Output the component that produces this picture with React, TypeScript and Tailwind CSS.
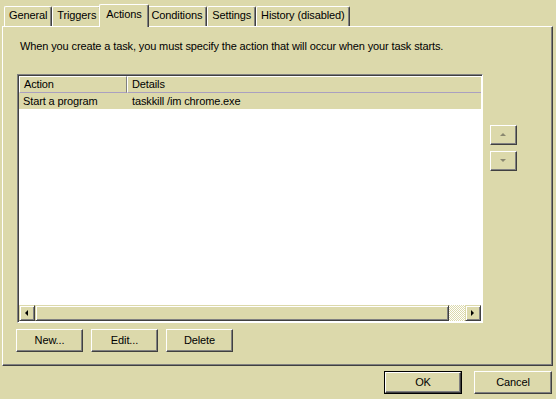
import React from 'react';

const face = 'bg-[#dcd9ab]';

function Tab({ label, active }: { label: string; active?: boolean }) {
  if (active) {
    return (
      <div className="relative z-10 -mb-px -mx-[2px] h-[23px] px-[6px] pt-[3px] bg-[#dcd9ab] border-t border-l border-white border-r border-r-[#404040] shadow-[inset_-1px_0_0_#808080] rounded-t-[2px]">
        {label}
      </div>
    );
  }
  return (
    <div className="h-[20px] px-[4px] pt-[2px] border-t border-l border-white border-r border-r-[#404040] shadow-[inset_-1px_0_0_#808080] rounded-t-[2px]">
      {label}
    </div>
  );
}

function Button({ label, w, h = 'h-[23px]', def }: { label?: string; w: string; h?: string; def?: boolean }) {
  return (
    <div className={`${w} ${h} ${def ? 'border border-black' : ''} ${face}`}>
      <div className="w-full h-full flex items-center justify-center border-t border-l border-white border-r border-b border-r-[#404040] border-b-[#404040] shadow-[inset_-1px_-1px_0_#808080]">
        {label}
      </div>
    </div>
  );
}

function Arrow({ dir }: { dir: 'up' | 'down' | 'left' | 'right' }) {
  const pts = {
    up: '0,3 3,0 6,3',
    down: '0,0 6,0 3,3',
    left: '3,0 3,6 0,3',
    right: '0,0 3,3 0,6',
  }[dir];
  const size = dir === 'up' || dir === 'down' ? { w: 7, h: 4 } : { w: 4, h: 7 };
  return (
    <svg width={size.w} height={size.h} viewBox={`0 0 ${size.w} ${size.h}`}>
      <polygon points={pts} fill={dir === 'up' || dir === 'down' ? '#8a8870' : '#000'} />
    </svg>
  );
}

function ScrollBtn({ dir }: { dir: 'left' | 'right' }) {
  return (
    <div className={`w-[16px] h-[16px] ${face} flex items-center justify-center border-t border-l border-[#dcd9ab] border-r border-b border-r-[#404040] border-b-[#404040] shadow-[inset_1px_1px_0_#fff,inset_-1px_-1px_0_#808080]`}>
      <Arrow dir={dir} />
    </div>
  );
}

export default function App() {
  return (
    <div
      className={`w-[556px] h-[399px] ${face} text-[11px] leading-[13px] tracking-[-0.12px] text-black overflow-hidden flex flex-col`}
      style={{ fontFamily: '"Liberation Sans", Arial, sans-serif' }}
    >
      <div className="flex items-end h-[26px] pl-[4px]">
        <Tab label="General" />
        <Tab label="Triggers" />
        <Tab label="Actions" active />
        <Tab label="Conditions" />
        <Tab label="Settings" />
        <Tab label="History (disabled)" />
      </div>

      <div className="ml-[2px] w-[551px] h-[340px] border-t border-l border-white border-r border-b border-r-[#404040] border-b-[#404040] shadow-[inset_-1px_-1px_0_#808080] pl-[14px] pt-[13px]">
        <div className="pl-[3px]">When you create a task, you must specify the action that will occur when your task starts.</div>

        <div className="flex mt-[21px]">
          <div className="w-[466px] h-[249px] border-t border-l border-[#808080] border-r border-b border-r-white border-b-white shadow-[inset_1px_1px_0_#404040] bg-white flex flex-col p-[1px]">
            <div className={`flex h-[17px] ${face}`}>
              <div className="w-[108px] flex items-center pl-[4px] border-t border-l border-white border-r border-b border-r-[#808080] border-b-[#aaa0c0]">Action</div>
              <div className="flex-1 flex items-center pl-[4px] border-t border-l border-white border-b border-b-[#aaa0c0]">Details</div>
            </div>
            <div className={`flex h-[16px] items-center ${face}`}>
              <div className="w-[108px] pl-[4px]">Start a program</div>
              <div className="pl-[5px]">taskkill /im chrome.exe</div>
            </div>
            <div className="flex-1" />
            <div className="flex h-[16px]">
              <ScrollBtn dir="left" />
              <div className={`flex-1 ${face} border-t border-l border-[#dcd9ab] border-r border-b border-r-[#404040] border-b-[#404040] shadow-[inset_1px_1px_0_#fff,inset_-1px_-1px_0_#808080]`} />
              <div className="w-[16px] bg-[repeating-conic-gradient(#ffffff_0_25%,#dcd9ab_0_50%)] bg-[length:2px_2px]" />
              <ScrollBtn dir="right" />
            </div>
          </div>

          <div className="ml-[7px] pt-[51px] flex flex-col gap-[6px]">
            <div className="w-[27px] h-[20px]">
              <div className={`w-full h-full ${face} flex items-center justify-center border-t border-l border-white border-r border-b border-r-[#404040] border-b-[#404040] shadow-[inset_-1px_-1px_0_#808080]`}>
                <Arrow dir="up" />
              </div>
            </div>
            <div className="w-[27px] h-[20px]">
              <div className={`w-full h-full ${face} flex items-center justify-center border-t border-l border-white border-r border-b border-r-[#404040] border-b-[#404040] shadow-[inset_-1px_-1px_0_#808080]`}>
                <Arrow dir="down" />
              </div>
            </div>
          </div>
        </div>

        <div className="flex gap-[8px] mt-[6px] -ml-[1px]">
          <Button label="New..." w="w-[67px]" />
          <Button label="Edit..." w="w-[67px]" />
          <Button label="Delete" w="w-[67px]" />
        </div>
      </div>

      <div className="flex justify-end gap-[12px] pr-[4px] pt-[5px]">
        <Button label="OK" w="w-[78px]" h="h-[23px]" def />
        <Button label="Cancel" w="w-[78px]" h="h-[23px]" />
      </div>
    </div>
  );
}
